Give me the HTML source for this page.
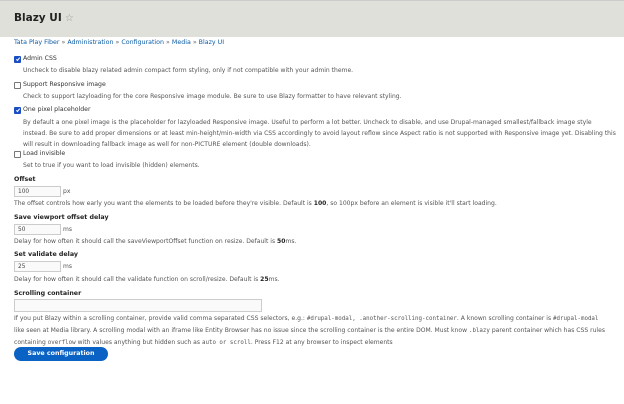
<!DOCTYPE html>
<html><head><style>
body{margin:0;width:624px;height:404px;background:#fff;font-family:"DejaVu Sans","Liberation Sans",sans-serif;color:#333;position:relative;overflow:hidden}
.a{position:absolute;white-space:nowrap}
.hd{position:absolute;left:0;top:0;width:624px;height:36px;background:#e0e0da;border-top:1px solid #ccc}
.t{font-size:10.5px;font-weight:bold;color:#222}
.bc{font-size:6.3px;color:#0d5da8}
.lb{font-size:6.2px;color:#333}
.d{font-size:6.05px;color:#555}
.b{font-size:6.3px;font-weight:bold;color:#222}
.cb{position:absolute;width:5px;height:5px;border:1px solid #777;border-radius:1px;background:#fff}
.cb.on{background:#1a4fc4;border-color:#1a4fc4}
.cb.on:after{content:"";position:absolute;left:1.5px;top:0;width:1.3px;height:3px;border:solid #fff;border-width:0 1px 1px 0;transform:rotate(40deg)}
.in{position:absolute;border:1px solid #ccc;background:#fafafa;font-size:5.8px;color:#444;box-sizing:border-box;padding:2px 3px}
code{font-family:"DejaVu Sans Mono",monospace;font-size:5.8px}
.btn{position:absolute;left:14px;top:347px;width:94px;height:14px;border-radius:7px;background:#0a63c4;color:#fff;font-size:6.3px;font-weight:bold;text-align:center;line-height:14px}
</style></head><body>
<div class="hd"></div>
<div class="a t" style="left:14px;top:12px">Blazy UI<span style="color:#999;font-weight:normal;font-size:10px"> ☆</span></div>
<div class="a bc" style="left:14px;top:39px">Tata Play Fiber <span style="color:#666">»</span> Administration <span style="color:#666">»</span> Configuration <span style="color:#666">»</span> Media <span style="color:#666">»</span> Blazy UI</div>

<div class="cb on" style="left:14px;top:56px"></div>
<div class="a lb" style="left:23px;top:55px">Admin CSS</div>
<div class="a d" style="left:23px;top:67px">Uncheck to disable blazy related admin compact form styling, only if not compatible with your admin theme.</div>

<div class="cb" style="left:14px;top:82px"></div>
<div class="a lb" style="left:23px;top:81px">Support Responsive image</div>
<div class="a d" style="left:23px;top:93px">Check to support lazyloading for the core Responsive image module. Be sure to use Blazy formatter to have relevant styling.</div>

<div class="cb on" style="left:14px;top:107px"></div>
<div class="a lb" style="left:23px;top:106px">One pixel placeholder</div>
<div class="a d" style="left:23px;top:117px;line-height:11px">By default a one pixel image is the placeholder for lazyloaded Responsive image. Useful to perform a lot better. Uncheck to disable, and use Drupal-managed smallest/fallback image style<br>instead. Be sure to add proper dimensions or at least min-height/min-width via CSS accordingly to avoid layout reflow since Aspect ratio is not supported with Responsive image yet. Disabling this<br>will result in downloading fallback image as well for non-PICTURE element (double downloads).</div>

<div class="cb" style="left:14px;top:151px"></div>
<div class="a lb" style="left:23px;top:150px">Load invisible</div>
<div class="a d" style="left:23px;top:162px">Set to true if you want to load invisible (hidden) elements.</div>

<div class="a b" style="left:14px;top:176px">Offset</div>
<div class="in" style="left:14px;top:186px;width:47px;height:11px">100</div>
<div class="a d" style="left:63px;top:188px">px</div>
<div class="a d" style="left:14px;top:200px">The offset controls how early you want the elements to be loaded before they're visible. Default is <b style="color:#222">100</b>, so 100px before an element is visible it'll start loading.</div>

<div class="a b" style="left:14px;top:214px">Save viewport offset delay</div>
<div class="in" style="left:14px;top:224px;width:47px;height:11px">50</div>
<div class="a d" style="left:63px;top:226px">ms</div>
<div class="a d" style="left:14px;top:238px">Delay for how often it should call the saveViewportOffset function on resize. Default is <b style="color:#222">50</b>ms.</div>

<div class="a b" style="left:14px;top:251px">Set validate delay</div>
<div class="in" style="left:14px;top:261px;width:47px;height:11px">25</div>
<div class="a d" style="left:63px;top:263px">ms</div>
<div class="a d" style="left:14px;top:276px">Delay for how often it should call the validate function on scroll/resize. Default is <b style="color:#222">25</b>ms.</div>

<div class="a b" style="left:14px;top:290px">Scrolling container</div>
<div class="in" style="left:14px;top:299px;width:248px;height:13px"></div>
<div class="a d" style="left:14px;top:313px;line-height:11px">If you put Blazy within a scrolling container, provide valid comma separated CSS selectors, e.g.: <code>#drupal-modal, .another-scrolling-container</code>. A known scrolling container is <code>#drupal-modal</code><br>like seen at Media library. A scrolling modal with an iframe like Entity Browser has no issue since the scrolling container is the entire DOM. Must know <code>.blazy</code> parent container which has CSS rules<br>containing <code>overflow</code> with values anything but hidden such as <code>auto or scroll</code>. Press F12 at any browser to inspect elements</div>

<div class="btn">Save configuration</div>
</body></html>
